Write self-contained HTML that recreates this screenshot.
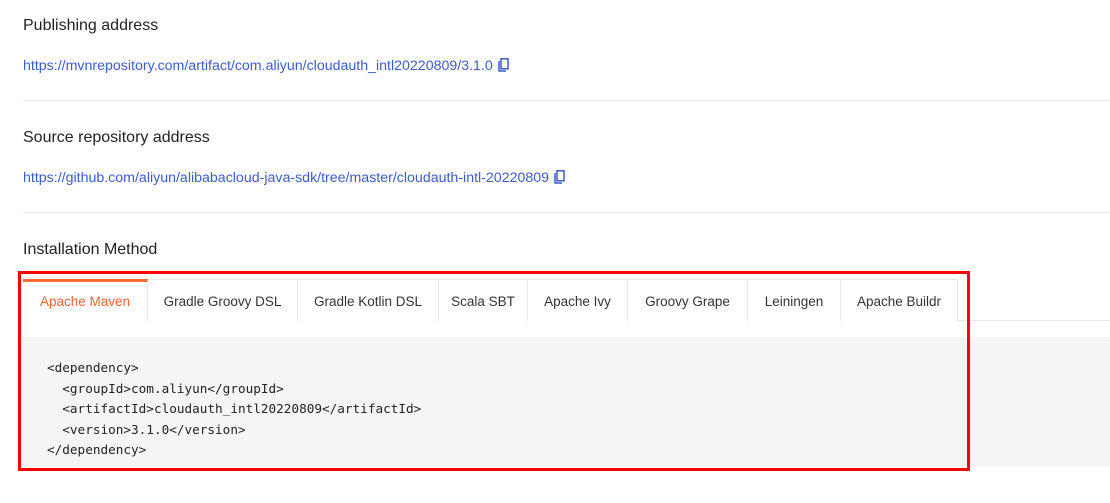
<!DOCTYPE html>
<html><head><style>
*{margin:0;padding:0;box-sizing:border-box}
body{width:1110px;height:503px;background:#fff;font-family:"Liberation Sans",sans-serif;color:#333;position:relative;overflow:hidden}
.h{position:absolute;left:23px;font-size:16px;color:#222}
.l{position:absolute;left:23px;font-size:14.2px;color:#3d5cc9}
.sep{position:absolute;left:23px;right:0;height:1px;background:#e8e8e8}
.cp{display:inline-block;vertical-align:-2px;margin-left:5px}
.tabs{position:absolute;left:23px;top:279px;height:42px;right:0;border-bottom:1px solid #e8e8e8}
.t{position:absolute;top:0;height:42px;border-right:1px solid #e8e8e8;font-size:13.5px;color:#333;text-align:center;line-height:44px;background:#fff}
.code{position:absolute;left:23px;right:0;top:337px;height:130px;background:#f5f5f5;font-family:"DejaVu Sans Mono","Liberation Mono",monospace;font-size:12.7px;color:#222;padding:21px 0 0 24px;line-height:20.5px;white-space:pre}
.red{position:absolute;left:18px;top:271px;width:952px;height:200px;border:3.5px solid #ff0000}
</style></head><body>
<div class="h" style="top:17px">Publishing address</div>
<div class="l" style="top:58px">https://mvnrepository.com/artifact/com.aliyun/cloudauth_intl20220809/3.1.0<svg class="cp" width="11" height="14" viewBox="0 0 11 14"><rect x="3" y="0.8" width="7" height="10" fill="none" stroke="#3d5cc9" stroke-width="1.5"/><path d="M1 3v10h7" fill="none" stroke="#3d5cc9" stroke-width="1.5"/></svg></div>
<div class="sep" style="top:100px"></div>
<div class="h" style="top:129px">Source repository address</div>
<div class="l" style="top:170px">https://github.com/aliyun/alibabacloud-java-sdk/tree/master/cloudauth-intl-20220809<svg class="cp" width="11" height="14" viewBox="0 0 11 14"><rect x="3" y="0.8" width="7" height="10" fill="none" stroke="#3d5cc9" stroke-width="1.5"/><path d="M1 3v10h7" fill="none" stroke="#3d5cc9" stroke-width="1.5"/></svg></div>
<div class="sep" style="top:212px"></div>
<div class="h" style="top:241px">Installation Method</div>
<div class="tabs">
<div class="t" style="left:0;width:125px;color:#f0643a;border-top:3px solid #ff6a2f;line-height:40px;height:43px;border-bottom:1px solid #fff">Apache Maven</div>
<div class="t" style="left:125px;width:150px;border-top:1px solid #e8e8e8">Gradle Groovy DSL</div>
<div class="t" style="left:275px;width:141px;border-top:1px solid #e8e8e8">Gradle Kotlin DSL</div>
<div class="t" style="left:416px;width:89px;border-top:1px solid #e8e8e8">Scala SBT</div>
<div class="t" style="left:505px;width:100px;border-top:1px solid #e8e8e8">Apache Ivy</div>
<div class="t" style="left:605px;width:120px;border-top:1px solid #e8e8e8">Groovy Grape</div>
<div class="t" style="left:725px;width:93px;border-top:1px solid #e8e8e8">Leiningen</div>
<div class="t" style="left:818px;width:117px;border-top:1px solid #e8e8e8">Apache Buildr</div>
</div>
<div class="code">&lt;dependency&gt;
  &lt;groupId&gt;com.aliyun&lt;/groupId&gt;
  &lt;artifactId&gt;cloudauth_intl20220809&lt;/artifactId&gt;
  &lt;version&gt;3.1.0&lt;/version&gt;
&lt;/dependency&gt;</div>
<div class="red"></div>
</body></html>
